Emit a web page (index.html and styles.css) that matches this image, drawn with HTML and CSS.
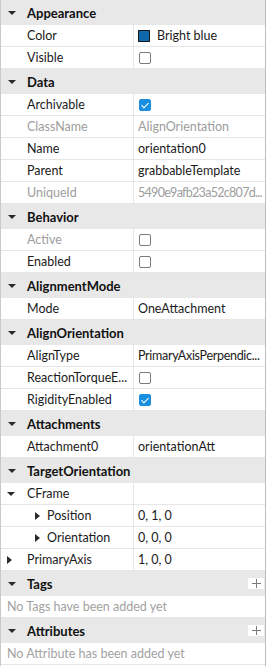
FILE: index.html
```html
<!DOCTYPE html>
<html lang="en">
<head>
    <meta charset="UTF-8">
    <meta name="viewport" content="width=device-width, initial-scale=1.0">
    <title>Properties</title>
    <link rel="stylesheet" href="styles.css">
</head>
<body>
    <div class="panel">
        <div class="section-header"><span class="twisty"><span class="caret-down"></span></span>Appearance</div>
        <div class="prop">
            <div class="prop-name">Color</div>
            <div class="prop-value"><span class="swatch"></span>Bright blue</div>
        </div>
        <div class="prop">
            <div class="prop-name">Visible</div>
            <div class="prop-value"><span class="checkbox"></span></div>
        </div>

        <div class="section-header"><span class="twisty"><span class="caret-down"></span></span>Data</div>
        <div class="prop">
            <div class="prop-name">Archivable</div>
            <div class="prop-value"><span class="checkbox checked"></span></div>
        </div>
        <div class="prop disabled">
            <div class="prop-name">ClassName</div>
            <div class="prop-value">AlignOrientation</div>
        </div>
        <div class="prop">
            <div class="prop-name">Name</div>
            <div class="prop-value">orientation0</div>
        </div>
        <div class="prop">
            <div class="prop-name">Parent</div>
            <div class="prop-value">grabbableTemplate</div>
        </div>
        <div class="prop disabled">
            <div class="prop-name">UniqueId</div>
            <div class="prop-value tighter">5490e9afb23a52c807d...</div>
        </div>

        <div class="section-header"><span class="twisty"><span class="caret-down"></span></span>Behavior</div>
        <div class="prop disabled">
            <div class="prop-name">Active</div>
            <div class="prop-value"><span class="checkbox"></span></div>
        </div>
        <div class="prop">
            <div class="prop-name">Enabled</div>
            <div class="prop-value"><span class="checkbox"></span></div>
        </div>

        <div class="section-header"><span class="twisty"><span class="caret-down"></span></span>AlignmentMode</div>
        <div class="prop">
            <div class="prop-name">Mode</div>
            <div class="prop-value">OneAttachment</div>
        </div>

        <div class="section-header"><span class="twisty"><span class="caret-down"></span></span>AlignOrientation</div>
        <div class="prop">
            <div class="prop-name">AlignType</div>
            <div class="prop-value tight">PrimaryAxisPerpendic...</div>
        </div>
        <div class="prop">
            <div class="prop-name">ReactionTorqueE...</div>
            <div class="prop-value"><span class="checkbox"></span></div>
        </div>
        <div class="prop">
            <div class="prop-name">RigidityEnabled</div>
            <div class="prop-value"><span class="checkbox checked"></span></div>
        </div>

        <div class="section-header"><span class="twisty"><span class="caret-down"></span></span>Attachments</div>
        <div class="prop">
            <div class="prop-name">Attachment0</div>
            <div class="prop-value">orientationAtt</div>
        </div>

        <div class="section-header"><span class="twisty"><span class="caret-down"></span></span>TargetOrientation</div>
        <div class="prop">
            <div class="prop-name nested"><span class="twisty"><span class="caret-down"></span></span>CFrame</div>
            <div class="prop-value"></div>
        </div>
        <div class="prop">
            <div class="prop-name child"><span class="twisty"><span class="caret-right"></span></span>Position</div>
            <div class="prop-value">0, 1, 0</div>
        </div>
        <div class="prop">
            <div class="prop-name child"><span class="twisty"><span class="caret-right"></span></span>Orientation</div>
            <div class="prop-value">0, 0, 0</div>
        </div>
        <div class="prop">
            <div class="prop-name nested"><span class="twisty"><span class="caret-right"></span></span>PrimaryAxis</div>
            <div class="prop-value">1, 0, 0</div>
        </div>

        <div class="section-header"><span class="twisty"><span class="caret-down"></span></span>Tags<span class="add-btn"></span></div>
        <div class="empty-note">No Tags have been added yet</div>

        <div class="section-header"><span class="twisty"><span class="caret-down"></span></span>Attributes<span class="add-btn"></span></div>
        <div class="empty-note">No Attribute has been added yet</div>
    </div>
</body>
</html>
```

FILE: styles.css
```css
* {
    margin: 0;
    padding: 0;
    box-sizing: border-box;
}

body {
    font-family: Lato, 'Noto Sans', sans-serif;
    font-size: 12.5px;
    color: #1b1b1b;
    background: #fff;
}

.panel {
    width: 266px;
    min-height: 666px;
    border-left: 1px solid #c9c9c9;
    border-right: 1px solid #bcbcbc;
}

.section-header {
    display: flex;
    align-items: center;
    height: 25px;
    padding-left: 7px;
    background: #e8e8e8;
    font-size: 13px;
    font-weight: bold;
    color: #111;
}

.twisty {
    display: flex;
    align-items: center;
    width: 19px;
    height: 100%;
    flex-shrink: 0;
}

.caret-down {
    width: 0;
    height: 0;
    border-left: 4px solid transparent;
    border-right: 4px solid transparent;
    border-top: 4px solid #2a2a2a;
}

.caret-right {
    width: 0;
    height: 0;
    border-top: 4px solid transparent;
    border-bottom: 4px solid transparent;
    border-left: 5px solid #2a2a2a;
}

.add-btn {
    position: relative;
    margin-left: auto;
    margin-right: 1px;
    width: 16px;
    height: 11px;
    background: #fff;
}

.add-btn::before,
.add-btn::after {
    content: "";
    position: absolute;
    background: #7a7a7a;
}

.add-btn::before {
    left: 4px;
    top: 5px;
    width: 9px;
    height: 1px;
}

.add-btn::after {
    left: 8px;
    top: 1px;
    width: 1px;
    height: 9px;
}

.prop {
    display: grid;
    grid-template-columns: 133px 1fr;
    height: 22px;
    border-bottom: 1px solid #e6e6e6;
}

.prop-name {
    display: flex;
    align-items: center;
    padding-left: 26px;
    border-right: 1px solid #e6e6e6;
    white-space: nowrap;
    overflow: hidden;
}

.prop-name.nested {
    padding-left: 6px;
}

.prop-name.nested .twisty {
    width: 20px;
}

.prop-name.child {
    padding-left: 34px;
}

.prop-name.child .twisty {
    width: 12px;
}

.prop-value {
    display: flex;
    align-items: center;
    padding-left: 4px;
    white-space: nowrap;
    overflow: hidden;
}

.prop-value.tight {
    letter-spacing: -0.3px;
}

.prop-value.tighter {
    letter-spacing: -0.7px;
}

.prop.disabled .prop-name,
.prop.disabled .prop-value {
    color: #9d9d9d;
}

.swatch {
    width: 12px;
    height: 12px;
    margin-right: 7px;
    background: #0d69ac;
    border: 1px solid #1a1a1a;
}

.checkbox {
    width: 12px;
    height: 12px;
    margin-left: 1px;
    border: 1px solid #7b7b7b;
    border-radius: 2px;
    background: #fff;
    position: relative;
}

.checkbox.checked {
    background: #1a8fe0;
    border-color: #1a8fe0;
}

.checkbox.checked::after {
    content: "";
    position: absolute;
    left: 3px;
    top: 1px;
    width: 3px;
    height: 6px;
    border-right: 1.5px solid #fff;
    border-bottom: 1.5px solid #fff;
    transform: rotate(45deg);
}

.empty-note {
    display: flex;
    align-items: center;
    height: 22px;
    padding-left: 6px;
    color: #a2a2a2;
    border-bottom: 1px solid #e6e6e6;
}
```
